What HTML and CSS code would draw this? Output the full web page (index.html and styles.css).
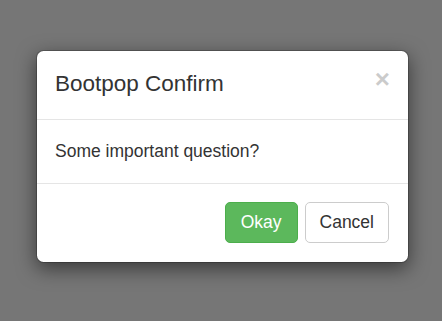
FILE: index.html
```html
<!DOCTYPE html>
<html lang="en">
<head>
<meta charset="utf-8">
<title>Bootpop Confirm</title>
<link rel="stylesheet" href="styles.css">
</head>
<body>
<div class="backdrop">
  <div class="modal" role="dialog">
    <div class="modal-header">
      <h4 class="modal-title">Bootpop Confirm</h4>
      <button type="button" class="close" aria-label="Close">×</button>
    </div>
    <div class="modal-body">Some important question?</div>
    <div class="modal-footer">
      <button type="button" class="btn btn-success">Okay</button>
      <button type="button" class="btn btn-default">Cancel</button>
    </div>
  </div>
</div>
</body>
</html>
```

FILE: styles.css
```css
html, body {
  margin: 0;
  padding: 0;
  height: 100%;
}

body {
  background: #767676;
  font-family: "Liberation Sans", Arial, sans-serif;
  font-size: 17.5px;
  line-height: 25px;
  color: #333;
  overflow: hidden;
}

.backdrop {
  display: flex;
  align-items: flex-start;
  padding: 50px 0 0 36px;
}

.modal {
  width: 373px;
  box-sizing: border-box;
  background: #fff;
  border: 1px solid rgba(0, 0, 0, 0.2);
  border-radius: 7.5px;
  box-shadow: 0 6px 19px rgba(0, 0, 0, 0.5);
  background-clip: padding-box;
}

.modal-header {
  display: flex;
  justify-content: space-between;
  align-items: flex-start;
  padding: 17px 18px 19px 18px;
  border-bottom: 1px solid #e5e5e5;
}

.modal-title {
  margin: 0;
  font-size: 22.5px;
  font-weight: 400;
  line-height: 32px;
  color: #333;
}

.close {
  margin: -2px 0 0 0;
  padding: 0;
  border: 0;
  background: transparent;
  font-family: "Liberation Sans", Arial, sans-serif;
  font-size: 26px;
  font-weight: 700;
  line-height: 26px;
  color: #000;
  opacity: 0.2;
  cursor: pointer;
}

.modal-body {
  padding: 18.75px 18px;
}

.modal-footer {
  display: flex;
  justify-content: flex-end;
  gap: 7px;
  padding: 18px 19px 19px;
  border-top: 1px solid #e5e5e5;
}

.btn {
  font-family: "Liberation Sans", Arial, sans-serif;
  font-size: 17.5px;
  line-height: 25px;
  padding: 7px 15px;
  border: 1px solid transparent;
  border-radius: 5px;
  cursor: pointer;
}

.btn-success {
  color: #fff;
  background: #5cb85c;
  border-color: #4cae4c;
}

.btn-default {
  color: #333;
  background: #fff;
  border-color: #ccc;
  padding-left: 14px;
  padding-right: 14px;
}
```
